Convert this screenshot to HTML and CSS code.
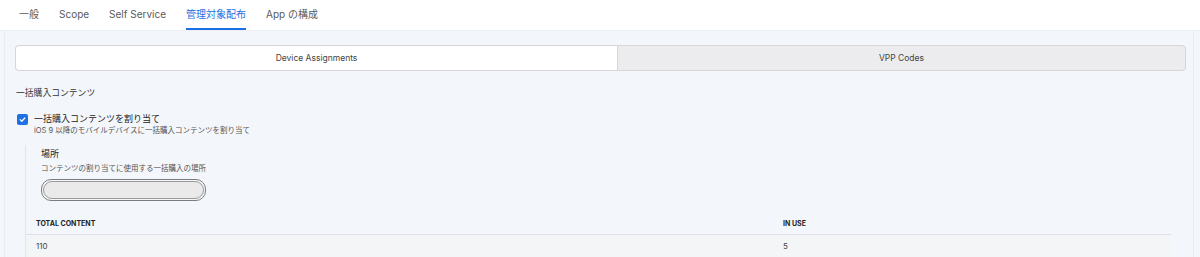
FILE: index.html
```html
<!DOCTYPE html>
<html lang="ja">
<head>
  <meta charset="UTF-8">
  <meta name="viewport" content="width=device-width, initial-scale=1.0">
  <title>管理対象配布</title>
  <link rel="stylesheet" href="styles.css">
</head>
<body>

  <nav class="tabs">
    <a href="#">一般</a>
    <a href="#">Scope</a>
    <a href="#">Self Service</a>
    <a href="#" class="active">管理対象配布</a>
    <a href="#">App の構成</a>
  </nav>

  <main class="panel">
    <div class="segments">
      <button class="seg seg-first active">Device Assignments</button>
      <button class="seg">VPP Codes</button>
    </div>

    <h2 class="section-title">一括購入コンテンツ</h2>

    <label class="check">
      <span class="box">
        <svg width="11" height="11" viewBox="0 0 11 11"><path d="M3.2 5.6l1.6 1.6 3-3.2" fill="none" stroke="#fff" stroke-width="1.3" stroke-linecap="round" stroke-linejoin="round"/></svg>
      </span>
      <span class="check-text">
        <span class="check-label">一括購入コンテンツを割り当て</span>
        <span class="hint">iOS 9 以降のモバイルデバイスに一括購入コンテンツを割り当て</span>
      </span>
    </label>

    <div class="nested">
      <div class="field">
        <div class="field-label">場所</div>
        <div class="hint">コンテンツの割り当てに使用する一括購入の場所</div>
        <div class="select"><div class="select-inner"></div></div>
      </div>

      <div class="table">
        <div class="row head">
          <span>TOTAL CONTENT</span>
          <span>IN USE</span>
        </div>
        <div class="row body">
          <span>110</span>
          <span>5</span>
        </div>
      </div>
    </div>
  </main>

</body>
</html>
```

FILE: styles.css
```css
body {
  font-family: 'Inter', 'Noto Sans CJK JP', sans-serif;
  background: #f3f6fa;
  margin: 0;
  color: #333;
}
.tabs {
  background-color: #ffffff;
  height: 30px;
  border-bottom: 1px solid #eceff3;
  display: flex;
  gap: 20px;
  padding-left: 19px;
}
.tabs a {
  font-size: 10px;
  color: #5a5a5a;
  text-decoration: none;
  line-height: 29px;
  height: 28px;
  border-bottom: 2px solid transparent;
}
.tabs a.active {
  color: #1c6fe3;
  border-bottom-color: #1c6fe3;
}
.panel {
  margin: 0 6px 0 4px;
  padding: 14px 7px 0 10px;
  border-left: 1px solid #e9edf2;
  border-right: 1px solid #e9edf2;
  height: 226px;
  box-sizing: border-box;
}
.segments {
  display: flex;
  height: 26px;
}
.seg {
  font-family: inherit;
  font-size: 8.5px;
  color: #444;
  background-color: #ececee;
  border: 1px solid #d6d6d8;
  border-radius: 0 4px 4px 0;
  flex: 1;
  padding: 0;
}
.seg-first {
  flex: 0 0 602px;
  border-radius: 4px 0 0 4px;
  border-right: none;
}
.seg.active {
  background-color: #ffffff;
}
.section-title {
  font-size: 8.8px;
  font-weight: normal;
  line-height: 12px;
  margin: 16px 0 0 1px;
  color: #333;
}
.check {
  display: flex;
  gap: 6px;
  margin: 14px 0 0 2px;
}
.box {
  width: 11px;
  height: 11px;
  border-radius: 2px;
  background-color: #1f6fe5;
  display: flex;
  margin-top: 1px;
}
.check-text {
  display: flex;
  flex-direction: column;
}
.check-label {
  font-size: 9px;
  line-height: 12px;
  color: #222;
}
.hint {
  font-size: 7.5px;
  line-height: 11px;
  color: #555;
}
.nested {
  margin: 9px 15px 0 10px;
  border-left: 1px solid #e2e6eb;
}
.field {
  padding: 3px 0 0 15px;
}
.field-label {
  font-size: 9px;
  line-height: 12px;
  color: #222;
  margin-bottom: 3px;
}
.select {
  margin-top: 5px;
  width: 165px;
  height: 22px;
  box-sizing: border-box;
  border: 1px solid #7c7c7c;
  border-radius: 10px;
  padding: 1px;
}
.select-inner {
  height: 100%;
  box-sizing: border-box;
  background-color: #eaeaea;
  border: 1px solid #9a9a9a;
  border-radius: 9px;
}
.table {
  margin-top: 11px;
}
.row {
  display: grid;
  grid-template-columns: 747px 1fr;
  padding-left: 10px;
  height: 22px;
  align-items: center;
}
.row.head {
  font-size: 7px;
  font-weight: bold;
  color: #222;
  border-bottom: 1px solid #dcdfe3;
}
.row.body {
  font-size: 8px;
  color: #444;
  background-color: #f4f5f6;
}
```
